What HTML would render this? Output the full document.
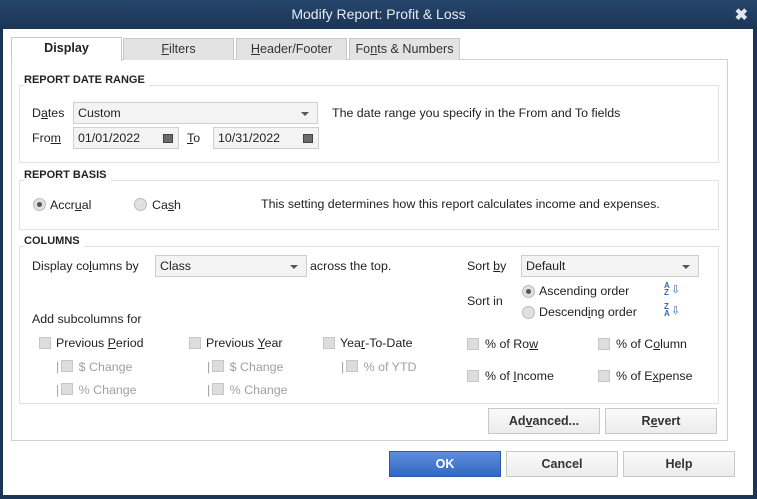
<!DOCTYPE html>
<html><head><style>
*{margin:0;padding:0;box-sizing:border-box}
body{width:757px;height:499px;background:#1b3556;font-family:"Liberation Sans",Arial,sans-serif;font-size:12.4px;color:#222;position:relative;overflow:hidden}
.a{position:absolute;white-space:nowrap}
#title{left:0;top:0;width:757px;height:29px;background:linear-gradient(#26466c,#1b3556);color:#e6ecf3;font-size:14px;text-align:center;line-height:29px}
#x{right:9px;top:5px;color:#dfe6ee;font-size:16px;font-weight:bold}
#body{left:3px;top:29px;width:750px;height:466px;background:#fff}
.tab{height:22px;border:1px solid #c8c8c8;border-bottom:none;background:#e3e3e3;text-align:center;line-height:21px;color:#333;font-size:12.6px}
.tab.on{background:#fff;font-weight:bold;height:24px;color:#222}
.box{border:1px solid #e2e2e2}
.lbl{font-weight:bold;font-size:11px;background:#fff;padding-right:4px;color:#222}
.inp{height:22px;border:1px solid #cfcfcf;background:#f3f3f3;line-height:20px;padding-left:4px}
.arr{position:absolute;right:8px;top:9px;border-left:4px solid transparent;border-right:4px solid transparent;border-top:4px solid #555}
.cal{position:absolute;right:5px;top:6px;width:10px;height:9px;background:#6a6a6a;border:1px solid #444}
.cb{width:12px;height:12px;background:#ddd;border:1px solid #c6c6c6}
.rd{width:13px;height:13px;border-radius:50%;background:#e0e0e0;border:1px solid #bbb}
.rd.on::after{content:"";position:absolute;left:3px;top:3px;width:5px;height:5px;border-radius:50%;background:#555}
.g{color:#a0a0a0}
.btn{height:26px;border:1px solid #c8c8c8;background:linear-gradient(#fafafa,#ececec);text-align:center;line-height:24px;font-weight:bold;color:#333;font-size:12.5px}
u{text-decoration:underline}
</style></head><body>
<div class="a" id="title">Modify Report: Profit &amp; Loss</div>
<div class="a" id="x">✖</div>
<div class="a" id="body"></div>
<div class="a box" style="left:11px;top:59px;width:717px;height:382px;border-color:#d0d0d0"></div>
<div class="a tab on" style="left:11px;top:37px;width:111px">Display</div>
<div class="a tab" style="left:123px;top:38px;width:111px"><u>F</u>ilters</div>
<div class="a tab" style="left:236px;top:38px;width:111px"><u>H</u>eader/Footer</div>
<div class="a tab" style="left:349px;top:38px;width:111px">Fo<u>n</u>ts &amp; Numbers</div>

<div class="a box" style="left:19px;top:85px;width:700px;height:78px"></div>
<div class="a lbl" style="left:24px;top:74px">REPORT DATE RANGE</div>
<div class="a" style="left:32px;top:106px">D<u>a</u>tes</div>
<div class="a inp" style="left:73px;top:102px;width:245px">Custom<span class="arr"></span></div>
<div class="a" style="left:332px;top:106px">The date range you specify in the From and To fields</div>
<div class="a" style="left:32px;top:131px">Fro<u>m</u></div>
<div class="a inp" style="left:73px;top:127px;width:106px">01/01/2022<span class="cal"></span></div>
<div class="a" style="left:187px;top:131px"><u>T</u>o</div>
<div class="a inp" style="left:213px;top:127px;width:106px">10/31/2022<span class="cal"></span></div>

<div class="a box" style="left:19px;top:180px;width:700px;height:50px"></div>
<div class="a lbl" style="left:24px;top:169px">REPORT BASIS</div>
<div class="a rd on" style="left:33px;top:198px"></div>
<div class="a" style="left:50px;top:198px">Accr<u>u</u>al</div>
<div class="a rd" style="left:134px;top:198px"></div>
<div class="a" style="left:152px;top:198px">Ca<u>s</u>h</div>
<div class="a" style="left:261px;top:197px">This setting determines how this report calculates income and expenses.</div>

<div class="a box" style="left:19px;top:246px;width:700px;height:158px"></div>
<div class="a lbl" style="left:24px;top:235px">COLUMNS</div>
<div class="a" style="left:32px;top:259px">Display co<u>l</u>umns by</div>
<div class="a inp" style="left:155px;top:255px;width:152px">Class<span class="arr"></span></div>
<div class="a" style="left:310px;top:259px">across the top.</div>
<div class="a" style="left:32px;top:312px">Add subcolumns for</div>
<div class="a cb" style="left:39px;top:337px"></div><div class="a" style="left:56px;top:336px">Previous <u>P</u>eriod</div>
<div class="a cb" style="left:189px;top:337px"></div><div class="a" style="left:206px;top:336px">Previous <u>Y</u>ear</div>
<div class="a cb" style="left:323px;top:337px"></div><div class="a" style="left:340px;top:336px">Yea<u>r</u>-To-Date</div>
<div class="a g" style="left:56px;top:360px">|<span class="cb" style="display:inline-block;vertical-align:-1px;margin:0 2px"></span> $ Change</div>
<div class="a g" style="left:56px;top:383px">|<span class="cb" style="display:inline-block;vertical-align:-1px;margin:0 2px"></span> % Change</div>
<div class="a g" style="left:207px;top:360px">|<span class="cb" style="display:inline-block;vertical-align:-1px;margin:0 2px"></span> $ Change</div>
<div class="a g" style="left:207px;top:383px">|<span class="cb" style="display:inline-block;vertical-align:-1px;margin:0 2px"></span> % Change</div>
<div class="a g" style="left:341px;top:360px">|<span class="cb" style="display:inline-block;vertical-align:-1px;margin:0 2px"></span> % of YTD</div>

<div class="a" style="left:467px;top:259px">Sort <u>b</u>y</div>
<div class="a inp" style="left:521px;top:255px;width:178px">Default<span class="arr"></span></div>
<div class="a" style="left:467px;top:294px">Sort in</div>
<div class="a rd on" style="left:522px;top:285px"></div><div class="a" style="left:539px;top:284px">Ascendin<u>g</u> order</div>
<div class="a rd" style="left:522px;top:306px"></div><div class="a" style="left:539px;top:305px">Descend<u>i</u>ng order</div>
<div class="a" style="left:664px;top:282px;font-size:8px;color:#3a6aa8;line-height:7px;font-weight:bold">A<br>Z</div><div class="a" style="left:671px;top:283px;font-size:11px;color:#3a6aa8">⇩</div>
<div class="a" style="left:664px;top:303px;font-size:8px;color:#3a6aa8;line-height:7px;font-weight:bold">Z<br>A</div><div class="a" style="left:671px;top:304px;font-size:11px;color:#3a6aa8">⇩</div>
<div class="a cb" style="left:467px;top:338px"></div><div class="a" style="left:485px;top:337px">% of Ro<u>w</u></div>
<div class="a cb" style="left:598px;top:338px"></div><div class="a" style="left:616px;top:337px">% of C<u>o</u>lumn</div>
<div class="a cb" style="left:467px;top:370px"></div><div class="a" style="left:485px;top:369px">% of <u>I</u>ncome</div>
<div class="a cb" style="left:598px;top:370px"></div><div class="a" style="left:616px;top:369px">% of E<u>x</u>pense</div>

<div class="a btn" style="left:488px;top:408px;width:112px">Ad<u>v</u>anced...</div>
<div class="a btn" style="left:605px;top:408px;width:112px">R<u>e</u>vert</div>
<div class="a btn" style="left:389px;top:451px;width:112px;background:linear-gradient(#5d8fdc,#3566c4);border-color:#2c58ad;color:#fff">OK</div>
<div class="a btn" style="left:506px;top:451px;width:112px">Cancel</div>
<div class="a btn" style="left:623px;top:451px;width:112px">Help</div>
</body></html>
